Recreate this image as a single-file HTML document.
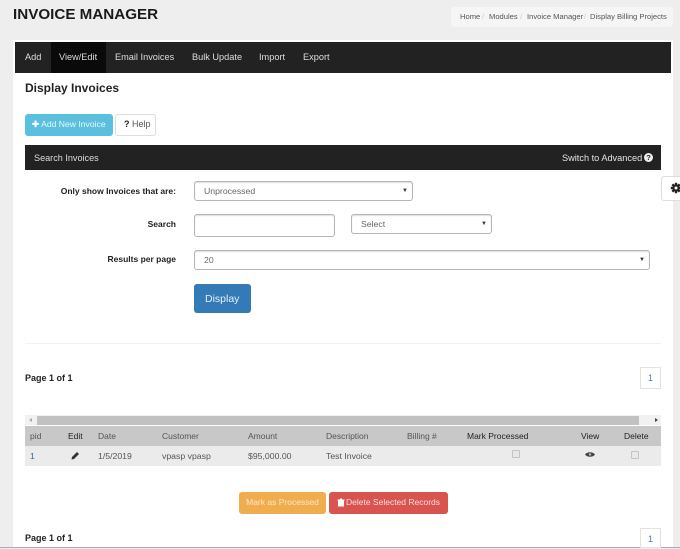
<!DOCTYPE html>
<html><head><meta charset="utf-8"><style>
html,body{margin:0;padding:0}
body{width:680px;height:548px;overflow:hidden;background:#eee;position:relative;font-family:"Liberation Sans",sans-serif;font-size:9px;color:#555}
div,span,svg{position:absolute}
.t{white-space:nowrap;line-height:12px}
.nav{color:#ddd;font-size:9.2px;top:51px;line-height:13px;white-space:nowrap}
.lab{color:#222;font-weight:bold;right:504px;white-space:nowrap;line-height:12px;font-size:8.5px}
.sel{background:#fff;border:1px solid #b5b5b5;border-radius:3px;box-sizing:border-box;box-shadow:inset 0 1px 1px #ddd;color:#666;font-size:8.7px;padding-left:9px}
.sel i{position:absolute;right:4px;top:0;font-style:normal;font-size:6px;color:#333}
.th{top:430px;color:#555;line-height:12px;white-space:nowrap;font-size:8.5px}
.thb{color:#222}
.td{top:450px;color:#555;line-height:12px;white-space:nowrap;font-size:8.7px}
.cb{width:6px;height:6px;border:1px solid #c4c4c4;border-radius:1px;background:#e8e8e8}
.pg{width:19px;height:20px;background:#fff;border:1px solid #e2e2e2;color:#4a7ba8;text-align:center;line-height:20px;font-size:9px}
</style></head><body>
<div class="t" style="left:13px;top:6px;font-size:15.2px;line-height:17px;font-weight:bold;color:#1a1a1a">INVOICE MANAGER</div>
<div style="left:451px;top:7px;width:222px;height:20px;background:#f5f5f5;border-radius:3px"></div>
<div class="t" style="left:460px;top:11px;font-size:7.6px;color:#555">Home</div>
<div class="t" style="left:482px;top:11px;font-size:7.6px;color:#ccc">/</div>
<div class="t" style="left:489px;top:11px;font-size:7.6px;color:#555">Modules</div>
<div class="t" style="left:520px;top:11px;font-size:7.6px;color:#ccc">/</div>
<div class="t" style="left:527px;top:11px;font-size:7.6px;color:#555">Invoice Manager</div>
<div class="t" style="left:584px;top:11px;font-size:7.6px;color:#ccc">/</div>
<div class="t" style="left:590px;top:11px;font-size:7.6px;color:#555">Display Billing Projects</div>

<div style="left:13px;top:40px;width:660px;height:507px;background:#fff"></div>
<div style="left:0;top:547px;width:680px;height:1px;background:#aaa"></div>

<div style="left:15px;top:42px;width:656px;height:31px;background:#222"></div>
<div style="left:51px;top:42px;width:55px;height:31px;background:#0a0a0a"></div>
<div class="nav" style="left:25px">Add</div>
<div class="nav" style="left:59px">View/Edit</div>
<div class="nav" style="left:115px">Email Invoices</div>
<div class="nav" style="left:192px">Bulk Update</div>
<div class="nav" style="left:259px">Import</div>
<div class="nav" style="left:303px">Export</div>

<div class="t" style="left:25px;top:81px;font-size:12px;line-height:15px;font-weight:bold;color:#222">Display Invoices</div>

<div style="left:25px;top:114px;width:88px;height:22px;background:#5bc0de;border-radius:3px"></div>
<div class="t" style="left:32px;top:118px;color:#e8f6fa;font-size:8.6px"><b style="color:#fff">✚</b> Add New Invoice</div>
<div style="left:115px;top:114px;width:39px;height:20px;background:#fff;border:1px solid #ddd;border-radius:3px"></div>
<div class="t" style="left:124px;top:118px;color:#555;font-size:9px"><b style="color:#222">?</b> Help</div>

<div style="left:25px;top:145px;width:636px;height:25px;background:#222"></div>
<div class="t" style="left:34px;top:152px;color:#ddd;font-size:9.1px">Search Invoices</div>
<div class="t" style="left:562px;top:152px;color:#e4e4e4;font-size:9.2px">Switch to Advanced</div>
<div style="left:644px;top:153px;width:9px;height:9px;background:#eee;border-radius:50%;color:#222;font-size:7.5px;line-height:9px;text-align:center;font-weight:bold">?</div>

<div style="left:661px;top:176px;width:19px;height:25px;background:#fff;border:1px solid #ddd;border-right:0;border-radius:3px 0 0 3px;box-sizing:border-box"></div>
<svg style="left:670px;top:182px" width="10" height="12" viewBox="0 0 10 12"><g fill="#222"><circle cx="6" cy="6" r="3.6"/><rect x="4.8" y="0.8" width="2.4" height="10.4"/><rect x="0.8" y="4.8" width="10.4" height="2.4"/><rect x="4.8" y="0.8" width="2.4" height="10.4" transform="rotate(45 6 6)"/><rect x="4.8" y="0.8" width="2.4" height="10.4" transform="rotate(-45 6 6)"/></g><circle cx="6" cy="6" r="1.5" fill="#fff"/></svg>

<div class="lab" style="top:185px">Only show Invoices that are:</div>
<div class="sel" style="left:194px;top:181px;width:219px;height:20px;line-height:18px">Unprocessed<i>▼</i></div>
<div class="lab" style="top:218px">Search</div>
<div style="left:194px;top:214px;width:141px;height:23px;background:#fff;border:1px solid #b5b5b5;border-radius:3px;box-sizing:border-box;box-shadow:inset 0 1px 1px #ddd"></div>
<div class="sel" style="left:351px;top:214px;width:141px;height:20px;line-height:18px">Select<i>▼</i></div>
<div class="lab" style="top:253px">Results per page</div>
<div class="sel" style="left:194px;top:250px;width:456px;height:20px;line-height:18px">20<i>▼</i></div>

<div style="left:194px;top:284px;width:57px;height:29px;background:#337ab7;border-radius:3px;color:#e6f0f8;font-size:10.5px;line-height:30px;text-align:center"><span style="left:11px;top:0;line-height:30px">Display</span></div>

<div style="left:25px;top:343px;width:636px;height:1px;background:#f2f2f2"></div>

<div class="t" style="left:25px;top:372px;font-weight:bold;color:#222;font-size:9px">Page 1 of 1</div>
<div class="pg" style="left:640px;top:367px">1</div>

<div style="left:25px;top:415px;width:636px;height:10px;background:#f1f1f1"></div>
<div style="left:37px;top:416px;width:602px;height:9px;background:#c1c1c1"></div>
<div style="left:29px;top:418px;width:0;height:0;border:2.5px solid transparent;border-right:3px solid #aaa;border-left:0"></div>
<div style="left:655px;top:418px;width:0;height:0;border:2.5px solid transparent;border-left:3px solid #444;border-right:0"></div>
<div style="left:25px;top:426px;width:636px;height:20px;background:#c8c8c8"></div>
<div style="left:25px;top:446px;width:636px;height:20px;background:#ebebeb"></div>

<div class="th" style="left:30px">pid</div>
<div class="th thb" style="left:68px">Edit</div>
<div class="th" style="left:98px">Date</div>
<div class="th" style="left:162px">Customer</div>
<div class="th" style="left:248px">Amount</div>
<div class="th" style="left:326px">Description</div>
<div class="th" style="left:407px">Billing #</div>
<div class="th thb" style="left:467px">Mark Processed</div>
<div class="th thb" style="left:581px">View</div>
<div class="th thb" style="left:624px">Delete</div>

<div class="td" style="left:30px;color:#336699">1</div>
<svg style="left:71px;top:451px" width="9" height="9" viewBox="0 0 9 9"><path d="M0.5 8.5 L1 6 L6 1 L8 3 L3 8 Z" fill="#333"/></svg>
<div class="td" style="left:98px">1/5/2019</div>
<div class="td" style="left:162px">vpasp vpasp</div>
<div class="td" style="left:248px">$95,000.00</div>
<div class="td" style="left:326px">Test Invoice</div>
<div class="cb" style="left:512px;top:450px"></div>
<svg style="left:585px;top:451px" width="10" height="7" viewBox="0 0 10 7"><path d="M0 3.5 C2 0.5 8 0.5 10 3.5 C8 6.5 2 6.5 0 3.5 Z" fill="#444"/><circle cx="5" cy="3.5" r="1.2" fill="#bbb"/></svg>
<div class="cb" style="left:631px;top:451px"></div>

<div style="left:239px;top:492px;width:87px;height:22px;background:#f0ad4e;border-radius:3px;color:#fbe6c8;font-size:8.5px;line-height:21px;text-align:center">Mark as Processed</div>
<div style="left:329px;top:492px;width:119px;height:22px;background:#d9534f;border-radius:3px;color:#fbdedd;font-size:8.5px;line-height:21px;white-space:nowrap">
<svg style="left:8px;top:6px" width="8" height="9" viewBox="0 0 8 9"><path d="M0.5 1.5H7.5V2.5H7V8.5H1V2.5H0.5Z M3 0.5H5V1.5H3Z" fill="#fff"/></svg>
<span style="left:17px;top:0">Delete Selected Records</span></div>

<div class="t" style="left:25px;top:532px;font-weight:bold;color:#222;font-size:9px">Page 1 of 1</div>
<div class="pg" style="left:640px;top:528px;height:18px">1</div>
</body></html>
